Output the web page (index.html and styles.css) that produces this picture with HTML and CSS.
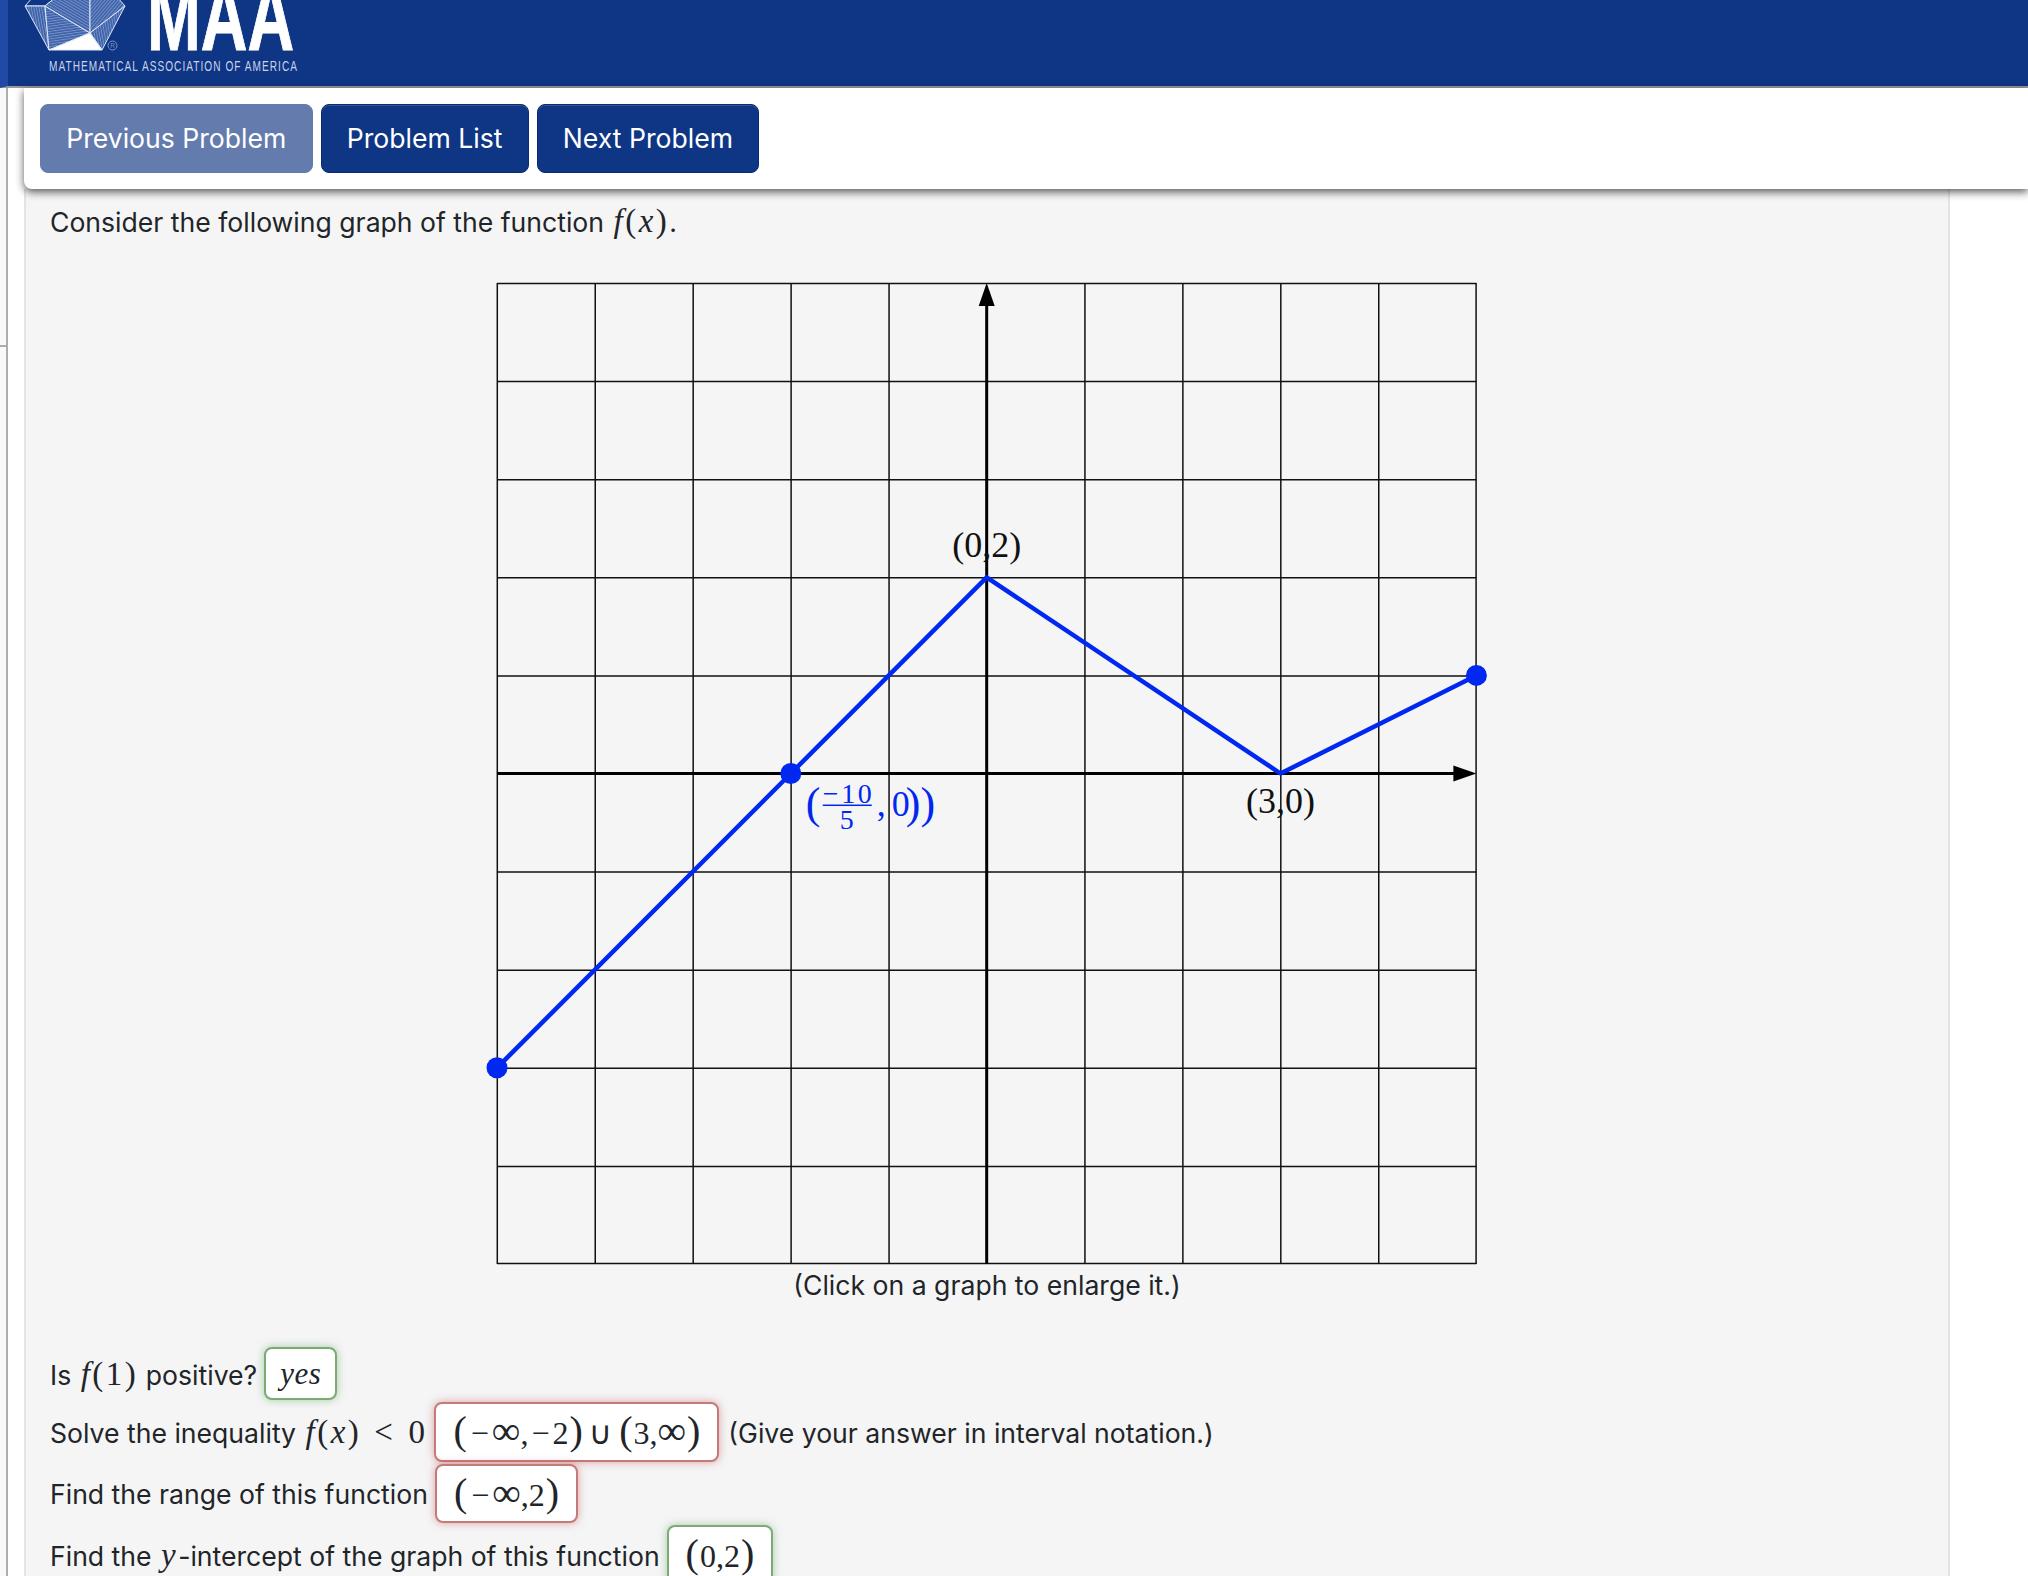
FILE: index.html
```html
<!DOCTYPE html>
<html lang="en">
<head>
<meta charset="utf-8">
<title>Problem</title>
<link rel="stylesheet" href="styles.css">
</head>
<body>
<div class="page">
  <header class="masthead">
    <svg class="logo" width="320" height="86" viewBox="0 0 320 86" aria-label="MAA">
      <defs>
        <pattern id="hatch-a" width="2.500" height="2.500" patternUnits="userSpaceOnUse" patternTransform="rotate(80)">
          <rect width="2.500" height="2.500" fill="#3a60aa"/>
          <rect width="2.500" height="1" fill="#7892c6"/>
        </pattern>
        <pattern id="hatch-b" width="2.500" height="2.500" patternUnits="userSpaceOnUse" patternTransform="rotate(-8)">
          <rect width="2.500" height="2.500" fill="#3a60aa"/>
          <rect width="2.500" height="1" fill="#7892c6"/>
        </pattern>
        <pattern id="hatch-c" width="2.500" height="2.500" patternUnits="userSpaceOnUse" patternTransform="rotate(30)">
          <rect width="2.500" height="2.500" fill="#3a60aa"/>
          <rect width="2.500" height="1" fill="#7892c6"/>
        </pattern>
        <pattern id="hatch-d" width="2.500" height="2.500" patternUnits="userSpaceOnUse" patternTransform="rotate(-50)">
          <rect width="2.500" height="2.500" fill="#3a60aa"/>
          <rect width="2.500" height="1" fill="#7892c6"/>
        </pattern>
      </defs>
      <g stroke="#dfe6f4" stroke-width="1" stroke-linejoin="round">
        <polygon points="25,6 33,-3 56,-3 45,6" fill="#0f3585"/>
        <polygon points="25,6 45,6 49,50" fill="url(#hatch-a)"/>
        <polygon points="45,6 90,33 49,50" fill="url(#hatch-b)"/>
        <polygon points="45,6 56,-3 90,-3 90,33" fill="url(#hatch-c)"/>
        <polygon points="90,-3 117,-3 125,6 90,33" fill="url(#hatch-d)"/>
        <polygon points="125,6 102,50 90,33" fill="url(#hatch-a)"/>
        <polygon points="49,50 90,33 102,50" fill="#ffffff"/>
      </g>
      <circle class="mark" cx="112.500" cy="45.500" r="4.500"/>
      <text class="logo-r" x="112.500" y="48" text-anchor="middle">R</text>
      <text class="logo-word" x="147" y="50" textLength="147" lengthAdjust="spacingAndGlyphs">MAA</text>
      <text class="logo-sub" x="49" y="71" textLength="249" lengthAdjust="spacingAndGlyphs">MATHEMATICAL ASSOCIATION OF AMERICA</text>
    </svg>
  </header>
  <div class="layout">
    <aside class="rail">
      <div class="rail-line"><div class="rail-tick"></div></div>
    </aside>
    <main class="column">
      <nav class="toolbar">
        <a class="btn btn-off">Previous Problem</a>
        <a class="btn">Problem List</a>
        <a class="btn">Next Problem</a>
      </nav>
      <section class="problem">
        <p class="line intro">Consider the following graph of the function <span class="math"><i>f</i>(<i>x</i>)</span>.</p>
        <svg class="graph" viewBox="0 0 980 980" preserveAspectRatio="none">
          <g class="grid">
            <path d="M0.300 0V980M98.300 0V980M196.300 0V980M294.300 0V980M392.300 0V980M588.300 0V980M686.300 0V980M784.300 0V980M882.300 0V980M979.700 0V980"/>
            <path d="M0 0.500H980M0 98.500H980M0 196.500H980M0 294.500H980M0 392.500H980M0 588.500H980M0 686.500H980M0 784.500H980M0 882.500H980M0 979.500H980"/>
          </g>
          <path class="axis" d="M490 980V20M0 490H960"/>
          <polygon points="490,0 482,23 498,23"/>
          <polygon points="980,490 957,482 957,498"/>
          <polyline class="curve" points="0,784 294,490 490,294 784,490 980,392"/>
          <circle class="dot" cx="0" cy="784" r="10.500"/>
          <circle class="dot" cx="294" cy="490" r="10.500"/>
          <circle class="dot" cx="980" cy="392" r="10.500"/>
          <text class="lbl" x="490" y="274" text-anchor="middle">(0,2)</text>
          <text class="lbl" x="784" y="529" text-anchor="middle">(3,0)</text>
          <text class="lbl blue big" x="309" y="534">(</text>
          <text class="lbl blue small" x="326" y="519" textLength="49">−10</text>
          <rect class="frac" x="326" y="521" width="49" height="1.500"/>
          <text class="lbl blue small" x="343" y="545">5</text>
          <text class="lbl blue" x="380" y="532">,</text>
          <text class="lbl blue" x="395" y="532">0</text>
          <text class="lbl blue big" x="409" y="534">))</text>
        </svg>
        <p class="line caption">(Click on a graph to enlarge it.)</p>
        <div class="answers">
          <div class="row row-short"><span>Is <span class="math"><i>f</i>(1)</span> positive?</span><span class="ans ok"><i>yes</i></span></div>
          <div class="row"><span>Solve the inequality <span class="math"><i>f</i>(<i>x</i>)<span class="rel">&lt;</span>0</span></span><span class="ans bad"><span class="value"><span class="pl">(</span><span class="op">−</span><span class="inf">∞</span>,<span class="op">−</span>2<span class="pr">)</span><span class="union">∪</span><span class="pl">(</span>3,<span class="inf">∞</span><span class="pr">)</span></span></span><span class="note">(Give your answer in interval notation.)</span></div>
          <div class="row row-mid"><span>Find the range of this function</span><span class="ans bad"><span class="value"><span class="pl">(</span><span class="op">−</span><span class="inf">∞</span>,2<span class="pr">)</span></span></span></div>
          <div class="row"><span>Find the <span class="math"><i>y</i></span>-intercept of the graph of this function</span><span class="ans ok"><span class="value"><span class="pl">(</span>0,2<span class="pr">)</span></span></span></div>
        </div>
      </section>
    </main>
  </div>
</div>
</body>
</html>
```
FILE: styles.css
```css
* { box-sizing: border-box; }
html, body { margin: 0; padding: 0; background: #fff; }
body { font-family: Inter, "Liberation Sans", sans-serif; font-size: 26.6px; line-height: 39px; color: #212529; }
.page { width: 2028px; height: 1576px; overflow: hidden; }

.masthead { height: 88px; background: #0f3585; border-left: 8px solid #2149a8; border-bottom: 2px solid #9a9a9a; overflow: hidden; }
.logo { display: block; margin-left: -8px; }
.logo-word { font-family: "Liberation Sans", sans-serif; font-weight: 700; font-size: 96px; fill: #fff; stroke: #fff; stroke-width: 1px; }
.logo-sub { font-family: "Liberation Sans", sans-serif; font-size: 14.500px; letter-spacing: 1.500px; fill: #c9d4e8; }
.logo-r { font-family: "Liberation Sans", sans-serif; font-size: 6.500px; fill: #7d97c9; }
.mark { fill: none; stroke: #7d97c9; }

.layout { display: flex; }
.rail { width: 24px; flex: none; height: 1488px; }
.rail-line { width: 8px; height: 100%; background: #f8f9fb; border-right: 2px solid #adadad; }
.rail-tick { height: 259px; border-bottom: 2px solid #adadad; }
.column { flex: 1; min-width: 0; }

.toolbar { position: relative; z-index: 1; display: flex; gap: 8px; height: 101px; padding: 16px; background: #fff; border-radius: 0 0 0 8px; box-shadow: 0 3px 8px rgba(0,0,0,.65); }
.btn { display: flex; align-items: center; height: 69px; padding: 0 25.200px; border: 1px solid #0b2c72; border-radius: 8px; background: #0f3585; color: #fff; white-space: nowrap; box-shadow: inset 0 1px 0 rgba(255,255,255,.15); }
.btn-off { background: #647bae; border-color: #647bae; box-shadow: none; }

.problem { width: 1926px; height: 1400px; padding: 0 24px; background: #f5f5f5; border-left: 2px solid #e4e4e4; border-right: 2px solid #e4e4e4; }
.line { margin: 0; }
.intro { padding-top: 13px; }
.math { font-family: "Liberation Serif", serif; font-size: 33px; letter-spacing: 2.500px; margin-left: 2px; }
.rel { margin: 0 13px; }
.graph { display: block; width: 979.400px; height: 981px; margin: 41px auto 0; overflow: visible; }
.grid path { fill: none; stroke: #111; stroke-width: 1.500; }
.axis { fill: none; stroke: #000; stroke-width: 3; }
.curve { fill: none; stroke: #0028f0; stroke-width: 4.500; stroke-linejoin: round; }
.dot { fill: #0028f0; }
.lbl { font-family: "Liberation Serif", serif; font-size: 36px; fill: #111; }
.blue { fill: #0028f0; }
.small { font-size: 28px; }
.big { font-size: 44px; font-weight: 400; }
.frac { fill: #0028f0; }
.caption { margin-top: 2px; text-align: center; }

.answers { display: flex; flex-direction: column; gap: 2px; margin-top: 42px; }
.row { display: flex; align-items: center; gap: 7px; height: 60px; padding-top: 2px; }
.row-short { height: 53px; }
.row-mid { height: 59px; }
.note { margin-left: 2px; }
.ans { display: flex; align-items: center; justify-content: center; align-self: stretch; margin-top: -2px; padding: 0 14px; background: #fff; border: 2px solid; border-radius: 8px; }
.ans i { font-family: "Liberation Serif", serif; font-size: 31px; letter-spacing: .500px; }
.value { font-family: "Liberation Serif", serif; font-size: 32px; white-space: nowrap; padding: 0 3px; }
.pl, .pr { font-size: 40px; font-weight: 400; line-height: 1; }
.pl { margin-right: 1px; }
.pr { margin-left: 1px; }
.op { margin: 0 3px; }
.inf { font-size: 40px; line-height: 1; }
.ok { border-color: #7aab72; box-shadow: 0 0 8px rgba(90,160,90,.5); }
.bad { border-color: #c57a78; box-shadow: 0 0 8px rgba(190,80,80,.5); }
.union { font-family: "DejaVu Sans", sans-serif; font-size: 32px; margin: 0 7px 0 6px; }
```
